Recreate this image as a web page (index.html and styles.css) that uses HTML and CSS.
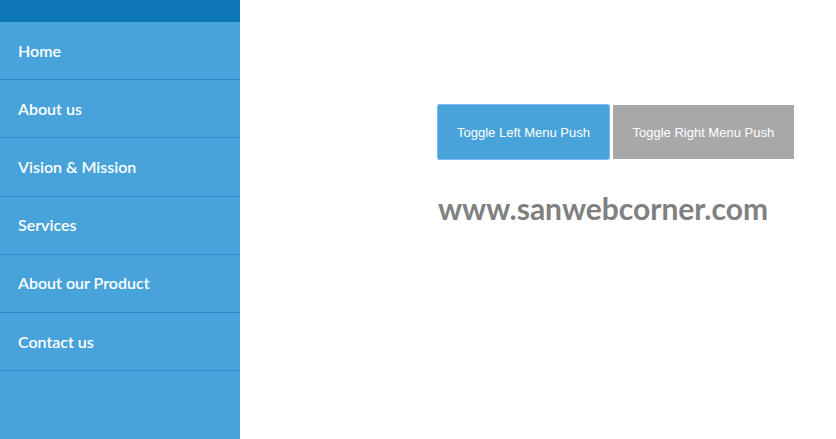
FILE: index.html
```html
<!DOCTYPE html>
<html>
<head>
<meta charset="utf-8">
<link rel="stylesheet" href="styles.css">
</head>
<body>
<div class="page">
  <nav class="menu">
    <div class="menu-top"></div>
    <a href="#">Home</a>
    <a href="#">About us</a>
    <a href="#">Vision &amp; Mission</a>
    <a href="#">Services</a>
    <a href="#">About our Product</a>
    <a href="#">Contact us</a>
  </nav>
  <main class="main">
    <div class="buttons">
      <button class="btn btn-active">Toggle Left Menu Push</button>
      <button class="btn btn-gray">Toggle Right Menu Push</button>
    </div>
    <h2 class="site">www.sanwebcorner.com</h2>
  </main>
</div>
</body>
</html>
```
FILE: styles.css
```css
html, body {
  margin: 0;
  padding: 0;
  background: #fff;
  height: 100%;
  overflow: hidden;
}
.page {
  display: flex;
  height: 439px;
}
.menu {
  width: 240px;
  flex: none;
  background: #47a3da;
  display: flex;
  flex-direction: column;
}
.menu-top {
  height: 22px;
  background: #0d77b6;
}
.menu a {
  display: block;
  color: #fff;
  text-decoration: none;
  font-family: Lato, "Open Sans", sans-serif;
  font-weight: 600;
  font-size: 16px;
  line-height: 22px;
  padding: 17.6px 18px;
  height: 22px;
  border-bottom: 1px solid #258ecd;
}
.main {
  flex: 1;
  padding: 105px 0 0 198px;
}
.buttons {
  display: flex;
  gap: 4px;
}
.btn {
  border: none;
  margin: 0;
  font-family: "Liberation Sans", Arial, sans-serif;
  font-size: 13px;
  line-height: 16px;
  color: #fff;
  padding: 20px 19px 18px;
  height: 54px;
  cursor: pointer;
}
.btn-active {
  background: #47a3da;
  outline: 1px solid #80b9f2;
  outline-offset: 0;
  border-radius: 1px;
}
.btn-gray {
  background: #a8a8a8;
  padding-left: 19.5px;
  padding-right: 19.5px;
}
.site {
  margin: 31px 0 0 0;
  font-family: Lato, "Open Sans", sans-serif;
  font-weight: 700;
  font-size: 30px;
  line-height: 36px;
  color: #808080;
}
```
